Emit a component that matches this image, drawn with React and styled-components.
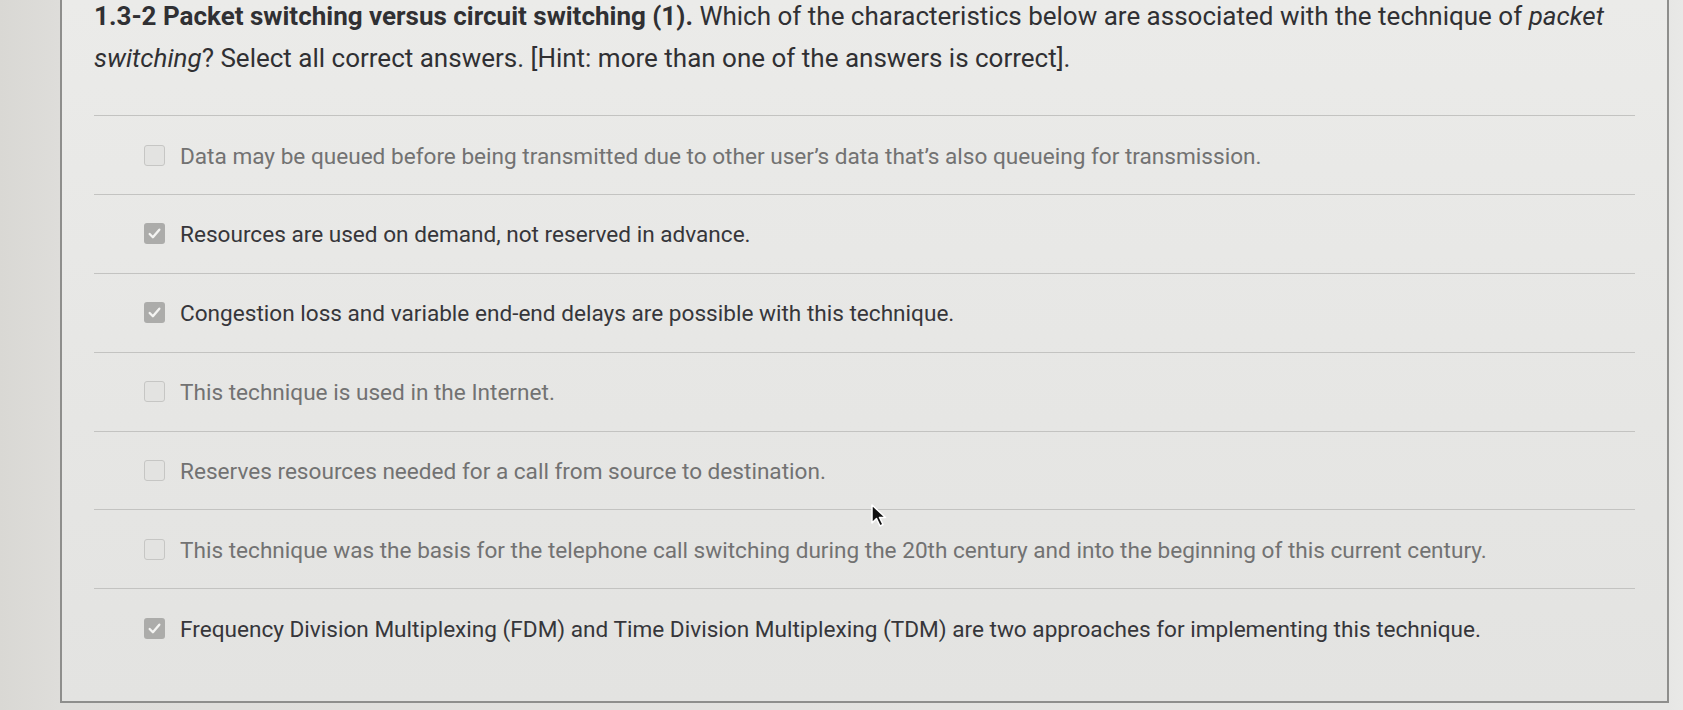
import React from 'react'
import styled, { createGlobalStyle } from 'styled-components'

const GlobalStyle = createGlobalStyle`
    html, body {
        margin: 0;
        padding: 0;
        background: #dcdbd7;
        font-family: Roboto, "Liberation Sans", Arial, sans-serif;
        overflow: hidden;
    }
`

const Page = styled.div`
    position: relative;
    display: flex;
    width: 1683px;
    height: 710px;
    background: linear-gradient(90deg, #d9d8d4 0px, #dedddA 60px, #e7e7e5 1669px, #e9e9e7 100%);
`

const Card = styled.div`
    margin-left: 60px;
    width: 1609px;
    height: 703px;
    box-sizing: border-box;
    border: 2px solid #8e8e8c;
    border-top: none;
    background: linear-gradient(180deg, #ebebe9 0%, #e6e6e4 60%, #e3e3e1 100%);
    padding: 0 32px;
    display: flex;
    flex-direction: column;
`

const Question = styled.p`
    margin: -5px 0 0;
    font-size: 26px;
    line-height: 42px;
    color: #303033;

    strong {
        font-weight: 700;
    }
`

const List = styled.ul`
    list-style: none;
    margin: 36px 0 0;
    padding: 0;
`

const Option = styled.li`
    display: flex;
    align-items: flex-start;
    gap: 15px;
    padding: 27.5px 0 24.4px 50px;
    border-top: 1.5px solid #c3c3c1;
    font-size: 22.6px;
    line-height: 26px;
    color: ${p => (p.$checked ? '#36363a' : '#727272')};
`

const Box = styled.span`
    flex: none;
    width: 21px;
    height: 21px;
    margin-top: 1px;
    box-sizing: border-box;
    border-radius: 3px;
    display: flex;
    align-items: center;
    justify-content: center;
    border: ${p => (p.$checked ? 'none' : '1.5px solid #c6c6c4')};
    background: ${p => (p.$checked ? '#acacaa' : '#e3e3e1')};
`

const Cursor = styled.svg`
    position: absolute;
    left: 870px;
    top: 503px;
`

const Check = () => (
    <svg width="15" height="15" viewBox="0 0 14 14">
        <path d="M2.5 7.5 L5.5 10.5 L11.5 3.5" fill="none" stroke="#f4f4f2" strokeWidth="2.2" strokeLinecap="round" strokeLinejoin="round" />
    </svg>
)

const options = [
    { text: 'Data may be queued before being transmitted due to other user\u2019s data that\u2019s also queueing for transmission.', checked: false },
    { text: 'Resources are used on demand, not reserved in advance.', checked: true },
    { text: 'Congestion loss and variable end-end delays are possible with this technique.', checked: true },
    { text: 'This technique is used in the Internet.', checked: false },
    { text: 'Reserves resources needed for a call from source to destination.', checked: false },
    { text: 'This technique was the basis for the telephone call switching during the 20th century and into the beginning of this current century.', checked: false },
    { text: 'Frequency Division Multiplexing (FDM) and Time Division Multiplexing (TDM) are two approaches for implementing this technique.', checked: true },
]

const App = () => {
    return (
        <Page>
            <GlobalStyle />
            <Card>
                <Question>
                    <strong>1.3-2 Packet switching versus circuit switching (1).</strong> Which of the characteristics below are associated with the technique of <em>packet switching</em>? Select all correct answers. [Hint: more than one of the answers is correct].
                </Question>
                <List>
                    {options.map(o => (
                        <Option key={o.text} $checked={o.checked}>
                            <Box $checked={o.checked}>{o.checked && <Check />}</Box>
                            <span>{o.text}</span>
                        </Option>
                    ))}
                </List>
            </Card>
            <Cursor width="18" height="26" viewBox="0 0 18 26">
                <path d="M2 2 L2 20 L6.5 15.5 L10 23 L13 21.5 L9.5 14.5 L15.5 14.5 Z" fill="#111" stroke="#fff" strokeWidth="1.5" strokeLinejoin="round" />
            </Cursor>
        </Page>
    )
}

export default App
